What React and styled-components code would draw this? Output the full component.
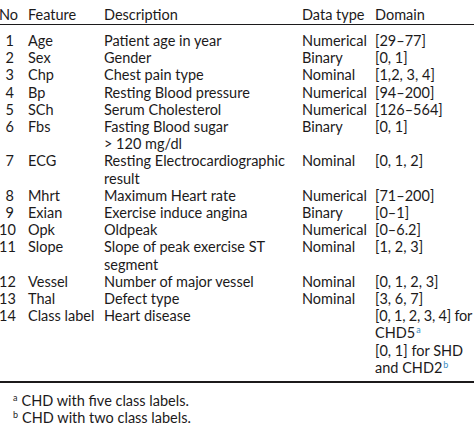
import styled, { createGlobalStyle } from "styled-components";

const GlobalStyle = createGlobalStyle`
  body {
    margin: 0;
    background: #ffffff;
  }
`;

const rows = [
  ["1", "Age", ["Patient age in year"], "Numerical", ["[29–77]"]],
  ["2", "Sex", ["Gender"], "Binary", ["[0, 1]"]],
  ["3", "Chp", ["Chest pain type"], "Nominal", ["[1,2, 3, 4]"]],
  ["4", "Bp", ["Resting Blood pressure"], "Numerical", ["[94–200]"]],
  ["5", "SCh", ["Serum Cholesterol"], "Numerical", ["[126–564]"]],
  ["6", "Fbs", ["Fasting Blood sugar", "> 120 mg/dl"], "Binary", ["[0, 1]"]],
  ["7", "ECG", ["Resting Electrocardiographic", "result"], "Nominal", ["[0, 1, 2]"]],
  ["8", "Mhrt", ["Maximum Heart rate"], "Numerical", ["[71–200]"]],
  ["9", "Exian", ["Exercise induce angina"], "Binary", ["[0–1]"]],
  ["10", "Opk", ["Oldpeak"], "Numerical", ["[0–6.2]"]],
  ["11", "Slope", ["Slope of peak exercise ST", "segment"], "Nominal", ["[1, 2, 3]"]],
  ["12", "Vessel", ["Number of major vessel"], "Nominal", ["[0, 1, 2, 3]"]],
  ["13", "Thal", ["Defect type"], "Nominal", ["[3, 6, 7]"]],
];

function Lines({ items }) {
  return items.map((line, i) => (
    <span key={i}>
      {i > 0 && <br />}
      {line}
    </span>
  ));
}

export default function App() {
  return (
    <>
      <GlobalStyle />
      <Page>
        <Table>
          <colgroup>
            <col style={{ width: 29 }} />
            <col style={{ width: 76 }} />
            <col style={{ width: 198 }} />
            <col style={{ width: 73 }} />
            <col />
          </colgroup>
          <thead>
            <tr>
              <HeadCell>No</HeadCell>
              <HeadCell>Feature</HeadCell>
              <HeadCell>Description</HeadCell>
              <HeadCell>Data type</HeadCell>
              <HeadCell>Domain</HeadCell>
            </tr>
          </thead>
          <tbody>
            {rows.map(([no, feature, desc, type, domain]) => (
              <Row key={no}>
                <NumCell>{no}</NumCell>
                <Cell>{feature}</Cell>
                <Cell>
                  <Lines items={desc} />
                </Cell>
                <Cell>{type}</Cell>
                <Cell>
                  <Lines items={domain} />
                </Cell>
              </Row>
            ))}
            <Row>
              <NumCell>14</NumCell>
              <Cell>Class label</Cell>
              <Cell>Heart disease</Cell>
              <Cell></Cell>
              <Cell>
                <Tight>[0, 1, 2, 3, 4] for</Tight>
                <br />
                CHD5<TableNote>a</TableNote>
                <br />
                [0, 1] for SHD
                <br />
                and CHD2<TableNote>b</TableNote>
              </Cell>
            </Row>
          </tbody>
        </Table>
        <Footnotes>
          <Footnote>
            <Mark>a</Mark>CHD with five class labels.
          </Footnote>
          <Footnote>
            <Mark>b</Mark>CHD with two class labels.
          </Footnote>
        </Footnotes>
      </Page>
    </>
  );
}

const Page = styled.div`
  padding-top: 6px;
  margin-left: -1px;
  width: 475px;
  font-family: Lato, "Liberation Sans", sans-serif;
  font-size: 14.5px;
  color: #1c1a1b;
`;

const Table = styled.table`
  width: 100%;
  border-collapse: collapse;
  table-layout: fixed;
  border-bottom: 2px solid #1c1a1b;
`;

const HeadCell = styled.th`
  text-align: left;
  font-weight: normal;
  line-height: 17px;
  padding: 0 0 1px 0;
  white-space: nowrap;
  border-bottom: 1.5px solid #1c1a1b;
`;

const Row = styled.tr`
  &:first-child td {
    padding-top: 7px;
  }
  &:last-child td {
    padding-bottom: 5px;
  }
`;

const Cell = styled.td`
  vertical-align: top;
  line-height: 17.2px;
  padding: 0;
  white-space: nowrap;
`;

const NumCell = styled(Cell)`
  text-align: right;
  padding-right: 14px;
`;

const Tight = styled.span`
  letter-spacing: -0.2px;
`;

const TableNote = styled.sup`
  font-size: 9px;
  line-height: 0;
  color: #3a8dc4;
  vertical-align: 5px;
  margin-left: 1px;
`;

const Footnotes = styled.div`
  margin-top: 10px;
  padding-left: 14px;
`;

const Footnote = styled.div`
  line-height: 16.5px;
`;

const Mark = styled.sup`
  font-size: 9px;
  line-height: 0;
  vertical-align: 5px;
  margin-right: 4px;
`;
